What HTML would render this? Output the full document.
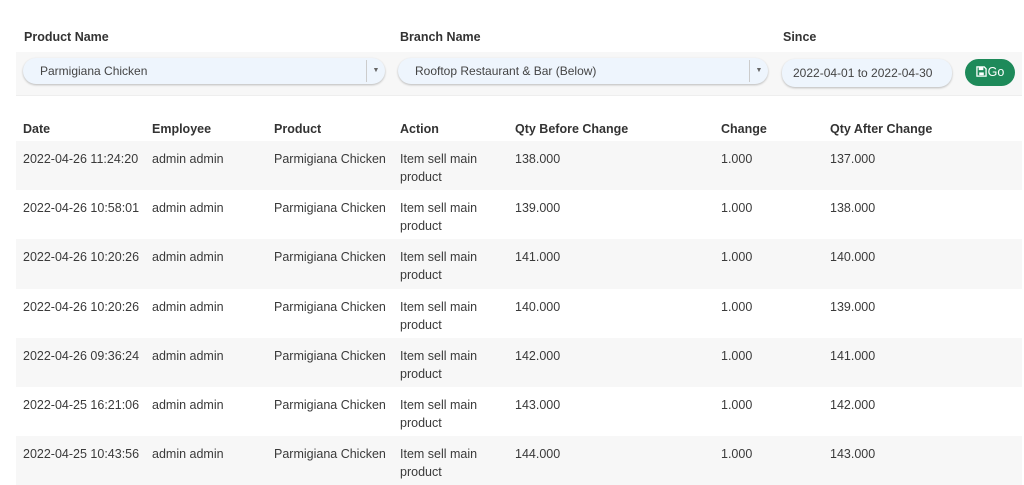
<!DOCTYPE html>
<html><head><style>
body{margin:0;width:1024px;height:484px;overflow:hidden;background:#fff;font-family:"Liberation Sans",sans-serif;color:#3a3a3a;font-size:12.5px}
.lab{position:absolute;top:30px;font-weight:bold;font-size:12.5px;color:#333}
.bar{position:absolute;left:16px;top:52px;width:1006px;height:43px;background:#f7f7f7;border-bottom:1px solid #eee}
.sel{position:absolute;top:58px;height:26px;background:#eef5fd;border-radius:13px;box-shadow:0 1px 2px rgba(0,0,0,.25);line-height:26px;font-size:12px;color:#444;box-sizing:border-box;padding-left:17px}
.sel .ar{position:absolute;right:0;top:2px;width:18px;height:22px;border-left:1px solid #ccc;text-align:center;font-size:7px;color:#666;line-height:22px}
.go{position:absolute;left:965px;top:59px;width:50px;height:27px;background:#1e8a5a;border-radius:14px;color:#fff;font-size:12.5px;line-height:27px;text-align:center}
table{position:absolute;left:16px;top:116px;width:1006px;border-collapse:collapse}
th{text-align:left;font-weight:bold;height:25px;padding:0 0 0 7px;font-size:12.5px;color:#333;vertical-align:middle}
td{height:49.2px;padding:0 0 0 7px;vertical-align:top;line-height:18px;box-sizing:border-box;padding-top:9px}
tbody tr:nth-child(odd){background:#f7f7f7}
</style></head><body>
<div class="lab" style="left:24px">Product Name</div>
<div class="lab" style="left:400px">Branch Name</div>
<div class="lab" style="left:783px">Since</div>
<div class="bar"></div>
<div class="sel" style="left:23px;width:362px">Parmigiana Chicken<span class="ar">▼</span></div>
<div class="sel" style="left:398px;width:370px">Rooftop Restaurant &amp; Bar (Below)<span class="ar">▼</span></div>
<div class="sel" style="left:782px;width:170px;top:59px;height:28px;line-height:28px;padding-left:11px">2022-04-01 to 2022-04-30</div>
<div class="go"><svg width="11" height="11" viewBox="0 0 12 12" style="vertical-align:-1px;margin-right:1px"><path d="M1 1h8l2 2v8H1z" fill="none" stroke="#fff" stroke-width="1.4"/><rect x="3" y="1.5" width="5" height="3" fill="#fff"/><rect x="3.5" y="7" width="5" height="3" fill="#fff"/></svg>Go</div>
<table>
<colgroup><col style="width:129px"><col style="width:122px"><col style="width:126px"><col style="width:115px"><col style="width:206px"><col style="width:109px"><col></colgroup>
<thead><tr><th>Date</th><th>Employee</th><th>Product</th><th>Action</th><th>Qty Before Change</th><th>Change</th><th>Qty After Change</th></tr></thead>
<tbody>
<tr><td>2022-04-26 11:24:20</td><td>admin admin</td><td>Parmigiana Chicken</td><td>Item sell main<br>product</td><td>138.000</td><td>1.000</td><td>137.000</td></tr>
<tr><td>2022-04-26 10:58:01</td><td>admin admin</td><td>Parmigiana Chicken</td><td>Item sell main<br>product</td><td>139.000</td><td>1.000</td><td>138.000</td></tr>
<tr><td>2022-04-26 10:20:26</td><td>admin admin</td><td>Parmigiana Chicken</td><td>Item sell main<br>product</td><td>141.000</td><td>1.000</td><td>140.000</td></tr>
<tr><td>2022-04-26 10:20:26</td><td>admin admin</td><td>Parmigiana Chicken</td><td>Item sell main<br>product</td><td>140.000</td><td>1.000</td><td>139.000</td></tr>
<tr><td>2022-04-26 09:36:24</td><td>admin admin</td><td>Parmigiana Chicken</td><td>Item sell main<br>product</td><td>142.000</td><td>1.000</td><td>141.000</td></tr>
<tr><td>2022-04-25 16:21:06</td><td>admin admin</td><td>Parmigiana Chicken</td><td>Item sell main<br>product</td><td>143.000</td><td>1.000</td><td>142.000</td></tr>
<tr><td>2022-04-25 10:43:56</td><td>admin admin</td><td>Parmigiana Chicken</td><td>Item sell main<br>product</td><td>144.000</td><td>1.000</td><td>143.000</td></tr>
</tbody></table>
</body></html>
